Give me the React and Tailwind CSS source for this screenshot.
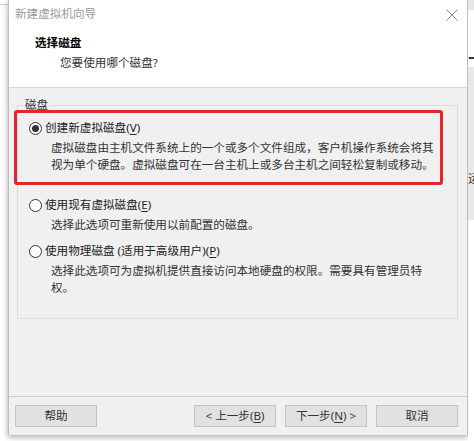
import React from 'react'

const font = { fontFamily: '"Noto Sans", "Noto Sans CJK SC", sans-serif' }

function Radio({ checked }) {
  return (
    <span className="flex h-[13px] w-[13px] shrink-0 items-center justify-center rounded-full border border-[#333] bg-white">
      {checked ? <span className="h-[7px] w-[7px] rounded-full bg-[#333]" /> : null}
    </span>
  )
}

function Option({ checked, label, keyChar, after = '', lines }) {
  return (
    <div>
      <div className="flex h-[16px] items-center gap-[3px] text-[11.6px] leading-[16px] text-[#222]">
        <Radio checked={checked} />
        <span className="whitespace-nowrap">
          {label}(<span className="underline underline-offset-2">{keyChar}</span>){after}
        </span>
      </div>
      <div className="mt-[3px] pl-[22px] text-[11.6px] leading-[17px] whitespace-nowrap text-[#333]">
        {lines.map((l, i) => (
          <div key={i}>{l}</div>
        ))}
      </div>
    </div>
  )
}

function Btn({ children }) {
  return (
    <button className="flex h-[22px] w-[82px] items-center justify-center border border-[#c4c4c4] bg-[#e1e1e1] text-[11.6px] leading-none text-[#333]">
      {children}
    </button>
  )
}

export default function App() {
  return (
    <div className="flex h-[441px] w-[474px] overflow-hidden bg-white" style={font}>
      {/* app behind, left edge */}
      <div className="w-[8px] shrink-0">
        <div className="mt-[4px] h-px bg-[#cfcfcf]" />
      </div>

      {/* wizard window */}
      <div className="flex h-[435px] w-[460px] shrink-0 flex-col border-x border-[#bdbdbd] bg-white shadow-[0_2px_6px_rgba(0,0,0,0.35)]">
        <div className="h-[87px] shrink-0 bg-white">
          <div className="flex items-center justify-between pt-[6px] pl-[6px] pr-[9px]">
            <span className="text-[11.6px] leading-[16px] text-[#9a9a9a]">新建虚拟机向导</span>
            <svg width="12" height="12" viewBox="0 0 12 12" className="mt-[1px]">
              <path d="M0.5 0.5 L11.5 11.5 M11.5 0.5 L0.5 11.5" stroke="#8a8a8a" strokeWidth="1" fill="none" />
            </svg>
          </div>
          <div className="mt-[13px] pl-[26px] text-[11.6px] leading-[16px] font-bold text-black">选择磁盘</div>
          <div className="mt-[4px] pl-[51px] text-[11.6px] leading-[16px] text-[#333]">您要使用哪个磁盘?</div>
        </div>

        <div className="h-[309px] shrink-0 border-t border-[#d6d6d6] bg-[#f0f0f0]">
          <fieldset className="mt-[10px] ml-[8px] h-[221px] w-[441px] border border-[#dcdcdc]">
            <legend className="ml-[5px] px-[2px] text-[11.6px] leading-[14px] text-[#333]">磁盘</legend>
            <div className="mt-[-2px] ml-[-4px] h-[75px] w-[429px] rounded-[3px] border-[3px] border-[#e3262a] pt-[7px] pl-[12px]">
              <Option
                checked
                label="创建新虚拟磁盘"
                keyChar="V"
                lines={[
                  '虚拟磁盘由主机文件系统上的一个或多个文件组成，客户机操作系统会将其',
                  '视为单个硬盘。虚拟磁盘可在一台主机上或多台主机之间轻松复制或移动。',
                ]}
              />
            </div>
            <div className="pl-[11px]">
              <div className="mt-[12px]">
                <Option label="使用现有虚拟磁盘" keyChar="E" lines={['选择此选项可重新使用以前配置的磁盘。']} />
              </div>
              <div className="mt-[10px]">
                <Option
                  label="使用物理磁盘 (适用于高级用户)"
                  keyChar="P"
                  lines={['选择此选项可为虚拟机提供直接访问本地硬盘的权限。需要具有管理员特', '权。']}
                />
              </div>
            </div>
          </fieldset>
        </div>

        <div className="flex flex-1 items-start justify-between border-t border-[#cfcfcf] bg-[#f0f0f0] pt-[8px] pl-[6px] pr-[9px]">
          <Btn>帮助</Btn>
          <div className="flex gap-[9px]">
            <Btn>
              &lt; 上一步(<span className="underline underline-offset-2">B</span>)
            </Btn>
            <Btn>
              下一步(<span className="underline underline-offset-2">N</span>) &gt;
            </Btn>
            <Btn>取消</Btn>
          </div>
        </div>
      </div>

      {/* app behind, right edge */}
      <div className="flex w-[6px] shrink-0 flex-col overflow-hidden">
        <div className="h-[10px] bg-[#e6e6e6]" />
        <div className="h-[47px] bg-white" />
        <div className="ml-[1px] h-[2px] w-[5px] bg-[#333]" />
        <div className="h-[8px] bg-white" />
        <div className="h-[153px] bg-[#e9e9e9] pt-[104px] text-[12px] leading-[16px] whitespace-nowrap text-[#333]">运</div>
        <div className="flex-1 bg-white" />
      </div>
    </div>
  )
}
